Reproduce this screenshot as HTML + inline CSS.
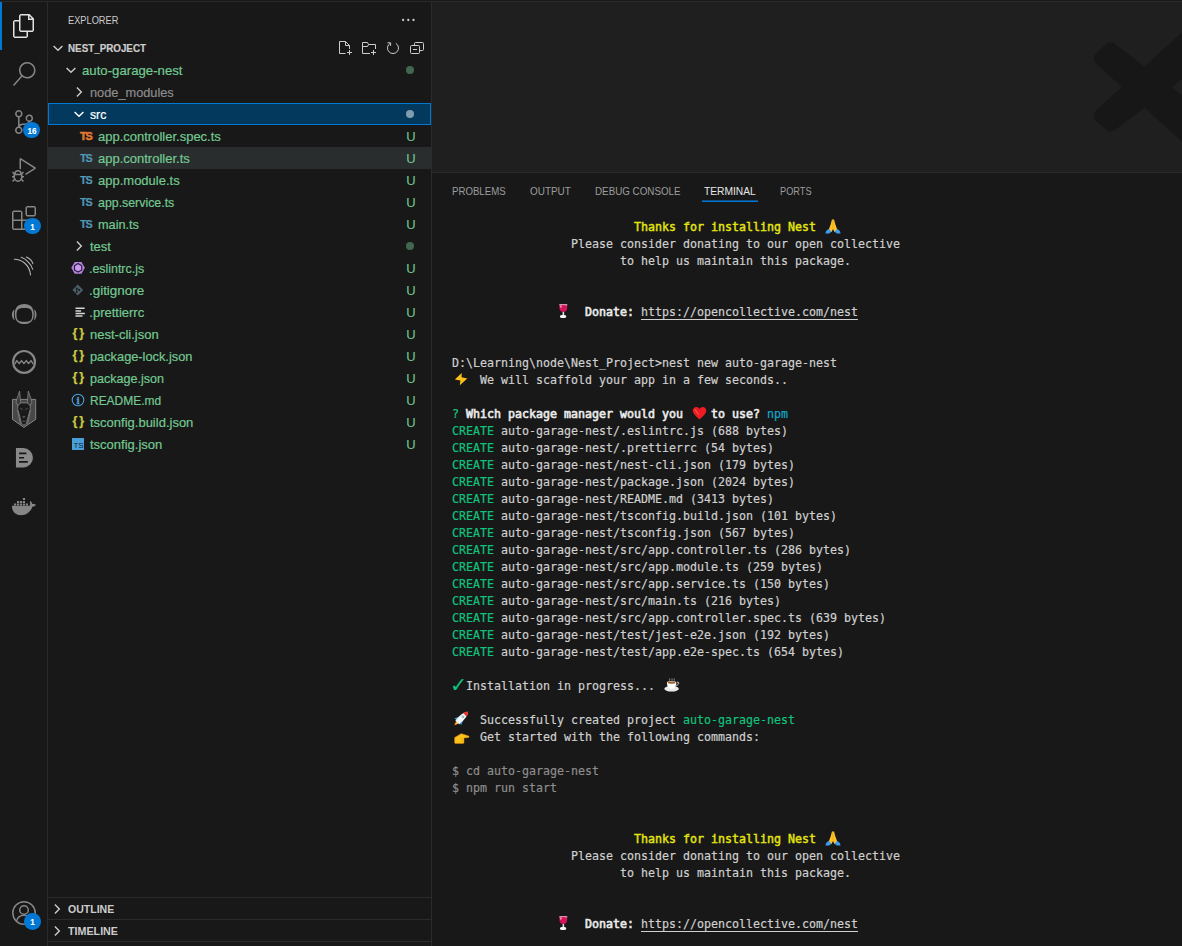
<!DOCTYPE html>
<html lang="en">
<head>
<meta charset="utf-8">
<title>Explorer - Nest_Project</title>
<style>
*{box-sizing:border-box;margin:0;padding:0}
html,body{width:1182px;height:946px;overflow:hidden;background:#181818}
body{position:relative;font-family:"Liberation Sans",sans-serif;font-size:13px;color:#cccccc}
.abs{position:absolute}
svg{display:block;overflow:visible}
#topline{left:0;top:1px;width:1182px;height:1px;background:#2b2b2b}
/* activity bar */
#activity{left:0;top:2px;width:48px;height:944px;background:#181818;border-right:1px solid #2b2b2b}
#activity .ind{left:0;top:0;width:2px;height:48px;background:#0078d4}
.aicon{position:absolute;left:12px;width:24px;height:24px}
.badge{position:absolute;height:16.500px;min-width:16.500px;border-radius:8.250px;background:#0078d4;color:#fff;font-size:9px;font-weight:bold;line-height:18.500px;text-align:center;-webkit-text-stroke:.12px #fff}
.badge span{display:inline-block;transform:scaleX(.9)}
/* sidebar */
#sidebar{left:48px;top:2px;width:384px;height:944px;background:#181818;border-right:1px solid #2b2b2b}
#sbtitle{left:20px;top:10px;font-size:11px;line-height:16px;color:#cccccc;white-space:nowrap}
.sx{display:inline-block;transform-origin:0 50%;white-space:nowrap}
.row{position:absolute;left:0;width:383px;height:22px;line-height:22px;white-space:nowrap}
.row .lbl{position:absolute;top:1px;height:22px;line-height:22px;-webkit-text-stroke:.2px currentColor}
.row .st{position:absolute;left:356px;top:1px;width:14px;text-align:center;font-size:13px;color:#73c991}
.row .dot{position:absolute;left:358px;top:7px;width:8px;height:8px;border-radius:50%;background:#73c991;opacity:.45}
.row.sel{background:#04395e;outline:1px solid #0078d4;outline-offset:-1px}
.row.sel .dot{background:#ffffff;opacity:.5}
.row.hov{background:#2a2d2e}
.g{color:#73c991}
.ign{color:#8c8c8c}
.w{color:#ffffff}
.hdr{font-weight:bold;font-size:11px;color:#cccccc}
.ic{position:absolute}
.tsi{top:0;height:22px;line-height:23px;font-size:10.8px;font-weight:bold;white-space:nowrap;letter-spacing:-1px}
.jsi{top:0;height:22px;line-height:21px;font-size:12.5px;font-weight:bold;color:#cbcb41;letter-spacing:2.1px;white-space:nowrap;-webkit-text-stroke:.25px #cbcb41;margin-left:.4px}
.tsc{top:5px;width:12px;height:12px;background:#4b9fd8;color:#0d2737;font-size:8px;line-height:14px;text-align:right;letter-spacing:-0.2px}
.tsc span{position:absolute;right:.6px;top:1px}
.pane{position:absolute;left:0;width:383px;height:22px;border-top:1px solid #2b2b2b}
/* editor */
#editor{left:432px;top:2px;width:750px;height:170px;background:#1f1f1f;overflow:hidden}
/* panel */
#panel{left:432px;top:172px;width:750px;height:774px;background:#181818;border-top:1px solid #2b2b2b}
.tab{position:absolute;top:10px;height:16px;line-height:16px;font-size:11px;color:#9d9d9d;white-space:nowrap}
.tab.act{color:#e7e7e7}
#tabline{left:270px;top:28px;width:56px;height:1px;background:#0078d4}
#tabline2{left:270px;top:27px;width:56px;height:1px;background:#0c4a80}
#term{left:20px;top:46px;font-family:"DejaVu Sans Mono","Liberation Mono",monospace;font-size:11.63px;line-height:17px;color:#d0d0d0;white-space:pre;-webkit-text-stroke:.18px currentColor}
#term .ln{height:17px;position:relative}
.e{display:inline-block;width:14px;height:17px;vertical-align:top;position:relative}
.e svg{position:absolute;left:0;top:0}
.ck span{position:absolute;left:-2px;top:-1px;font-family:"DejaVu Sans",sans-serif;font-size:20.500px;line-height:17px;color:#10c37e;-webkit-text-stroke:0}
.y{color:#e5e510;-webkit-text-stroke:.42px #e5e510}
.b{color:#ececec;-webkit-text-stroke:.6px #ececec}
.gr{color:#10c37e}
.cy{color:#11a8cd}
.dim{color:#8e8e8e}
.q{color:#16c784}
.u{text-decoration:underline;text-underline-offset:3px;text-decoration-thickness:1px}

</style>
</head>
<body>
<div id="topline" class="abs"></div>
<div id="activity" class="abs">
  <div class="ind abs"></div>
  <!-- explorer (active) -->
  <svg class="aicon" style="top:12px" viewBox="0 0 24 24" fill="#e2e2e2"><path d="M17.500 0h-9L7 1.500V6H2.500L1 7.500v15.070L2.500 24h12.070L16 22.570V18h4.700l1.300-1.430V4.500L17.500 0zm0 2.120l2.380 2.380H17.500V2.120zm-3 20.380h-12v-15H7v9.070L8.500 18h6v4.500zm6-6h-12v-15H16V6h4.500v10.500z"/></svg>
  <!-- search -->
  <svg class="aicon" style="top:60px" viewBox="0 0 24 24" fill="#868686"><path d="M15.250 0a8.250 8.250 0 0 0-6.180 13.720L1 22.880l1.120 1 8.050-9.120A8.251 8.251 0 1 0 15.250.010V0zm0 15a6.750 6.750 0 1 1 0-13.500 6.750 6.750 0 0 1 0 13.500z"/></svg>
  <!-- source control -->
  <svg class="aicon" style="top:108px" viewBox="0 0 24 24" fill="#868686"><path d="M21.007 8.222A3.738 3.738 0 0 0 15.045 5.200a3.737 3.737 0 0 0 1.156 6.583 2.988 2.988 0 0 1-2.668 1.670h-2.990a4.456 4.456 0 0 0-2.989 1.165V7.400a3.737 3.737 0 1 0-1.494 0v9.117a3.776 3.776 0 1 0 1.816.099 2.990 2.990 0 0 1 2.668-1.667h2.990a4.484 4.484 0 0 0 4.223-3.039 3.736 3.736 0 0 0 3.250-3.687zM4.565 3.738a2.242 2.242 0 1 1 4.484 0 2.242 2.242 0 0 1-4.484 0zm4.484 16.441a2.242 2.242 0 1 1-4.484 0 2.242 2.242 0 0 1 4.484 0zm8.221-9.715a2.242 2.242 0 1 1 0-4.485 2.242 2.242 0 0 1 0 4.485z"/></svg>
  <div class="badge" style="left:23.200px;top:119.700px;width:17px"><span>16</span></div>
  <!-- run and debug -->
  <svg class="aicon" style="top:156px" viewBox="0 0 24 24" fill="#868686"><path d="M10.940 13.500l-1.320 1.320a3.730 3.730 0 0 0-7.240 0L1.060 13.500 0 14.560l1.720 1.720-.220.220V18H0v1.500h1.500v.080c.077.489.214.966.410 1.420L0 22.940 1.060 24l1.650-1.650A4.308 4.308 0 0 0 6 24a4.310 4.310 0 0 0 3.290-1.650L10.940 24 12 22.940 10.090 21c.198-.464.336-.951.410-1.450v-.100H12V18h-1.500v-1.500l-.220-.220L12 14.560l-1.060-1.060zM6 13.500a2.250 2.250 0 0 1 2.250 2.250h-4.500A2.250 2.250 0 0 1 6 13.500zm3 6a3.330 3.330 0 0 1-3 3 3.330 3.330 0 0 1-3-3v-2.250h6v2.250zm14.760-9.900v1.260L13.500 17.370V15.600l8.500-5.370L9 2v9.460a5.070 5.070 0 0 0-1.500-.720V.630L8.640 0l15.120 9.600z"/></svg>
  <!-- extensions -->
  <svg class="aicon" style="top:204px" viewBox="0 0 24 24" fill="#868686"><path d="M13.500 1.500L15 0h7.500L24 1.500V9l-1.500 1.500H15L13.500 9V1.500zm1.500 0V9h7.500V1.500H15zM0 15V6l1.500-1.500H9L10.500 6v7.500H18l1.500 1.500v7.500L18 24H1.500L0 22.500V15zm9-1.500V6H1.500v7.500H9zM9 15H1.500v7.500H9V15zm1.500 7.500H18V15h-7.500v7.500z"/></svg>
  <div class="badge" style="left:24px;top:215.500px"><span>1</span></div>
  <!-- arcs -->
  <svg class="aicon" style="top:250px" viewBox="0 0 24 24" fill="none" stroke="#b4b4b4" stroke-width="1.1" stroke-linecap="round"><path d="M2.400 7.300C9 7.300 17.500 12 18.500 22.900"/><path d="M9.200 5.300C13.500 6.600 19 11.500 20.700 17.300"/><path d="M14.400 5.100C17 6.200 20 9 20.900 11.700"/></svg>
  <!-- helmet -->
  <svg class="aicon" style="top:298px" viewBox="0 0 24 24" fill="#868686"><path fill-rule="evenodd" d="M12.30 3.90C18.57 3.90 21.80 7.32 21.80 13.95C21.80 20.58 18.57 24.00 12.30 24.00C6.03 24.00 2.80 20.58 2.80 13.95C2.80 7.32 6.03 3.90 12.30 3.90ZM12.35 8.10C18.47 8.10 20.20 9.60 20.20 14.90C20.20 20.20 18.47 21.70 12.35 21.70C6.23 21.70 4.50 20.20 4.50 14.90C4.50 9.60 6.23 8.10 12.35 8.10Z"/><path d="M2.500 9.400C0.500 10.600 -0.300 13 -0.100 15.200C0.100 17.400 1.100 19.500 2.600 20.300C1.700 16.800 1.700 12.900 2.500 9.400ZM22.100 9.400C24.100 10.600 24.700 13 24.500 15.200C24.300 17.400 23.500 19.500 22 20.300C22.900 16.800 22.900 12.900 22.100 9.400Z"/></svg>
  <!-- circle wave -->
  <svg class="aicon" style="top:348px" viewBox="0 0 24 24" fill="none" stroke="#868686"><circle cx="12.070" cy="11.900" r="10.900" stroke-width="2.200"/><path d="M3.100 13.600L4.800 10.600L7.200 13.600L9.500 10.600L11.900 13.600L14.300 10.600L16.600 13.600L19 10.600L21 13.600" stroke-width="1.400" stroke-linejoin="round" stroke-linecap="round"/></svg>
  <!-- snyk -->
  <svg class="aicon" style="top:388px;height:38px" viewBox="0 0 24 38" fill="none"><path d="M0.500 9.400H23.700V29.400L11.900 37.400L0.500 29.400Z" fill="#484848" stroke="#868686" stroke-width="1"/><path d="M5.900 13.500L8.800 12.900H15.200L18.100 13.500L18.300 19.500L16.200 26.500L14.400 33.500L11.900 35.200L9.400 33.500L7.800 26.500L5.700 19.500Z" fill="#1a1a1a" stroke="#868686" stroke-width=".8" stroke-linejoin="round"/><path d="M7.600 1.100L3.900 12L5.900 15.500L8.800 12.900L8.400 9.400ZM16.300 1.100L20 12L18.100 15.500L15.200 12.900L15.600 9.400Z" fill="#3c3c3c" stroke="#868686" stroke-width=".8" stroke-linejoin="round"/><path d="M5.700 20L6.800 26.500L8.300 34M18.300 20L17.200 26.500L15.700 34" stroke="#7a7a7a" stroke-width=".9"/><path d="M8.400 18.500L10.600 19.400M15.600 18.500L13.400 19.400" stroke="#5a5a5a" stroke-width="1"/><path d="M10.100 26.200H13.500L11.800 28Z" fill="#6a6a6a"/><path d="M10.200 30.600C11 31.800 12.800 31.800 13.600 30.600" stroke="#5a5a5a" stroke-width=".9"/></svg>
  <!-- D -->
  <svg class="aicon" style="top:444px" viewBox="0 0 24 24"><path d="M3.950 2.100H11.300A9.650 9.650 0 0 1 11.300 21.400H3.950Z" fill="#8a8a8a"/><path d="M7 7.350H14.400M7 11.750H12.100M7 15.950H15.800" stroke="#181818" stroke-width="1.700"/></svg>
  <!-- docker -->
  <svg class="aicon" style="top:492px" viewBox="0 0 24 24" fill="#868686"><path d="M-0.100 11.800H17.600C18.400 10.400 18.200 8.600 17.700 7.800L18.600 7.100C19.600 7.900 20.200 9 20.400 10.100C21.600 9.700 22.900 9.900 23.900 10.600C23.400 12 22 12.800 20.400 12.800C18.400 18.200 14.200 21.200 9 21.200C3.400 21.200 -0.100 17.600 -0.100 11.800Z"/><path d="M2.050 9.400H4.200V11.400H2.050zM5 9.400H7.150V11.400H5zM7.950 9.400H10.100V11.400H7.950zM10.900 9.400H13.050V11.400H10.900zM13.850 9.400H16V11.400H13.850zM5 6.900H7.150V8.900H5zM7.950 6.900H10.100V8.900H7.950zM10.900 6.900H13.050V8.900H10.900zM10.900 4.100H13.050V6.100H10.900z"/></svg>
  <!-- account -->
  <svg class="aicon" style="top:898.800px" viewBox="0 0 24 24" fill="none" stroke="#868686" stroke-width="1.500"><circle cx="12" cy="12" r="11.200"/><circle cx="12" cy="9" r="4.300"/><path d="M4.400 20.400C5.400 16.400 8.400 14.300 12 14.300C15.600 14.300 18.600 16.400 19.600 20.400"/></svg>
  <div class="badge" style="left:24px;top:911px"><span>1</span></div>
</div>

<div id="sidebar" class="abs">
  <div id="sbtitle" class="abs"><span class="sx" style="transform:scaleX(.84)">EXPLORER</span></div>
  <svg class="abs" style="left:352px;top:10px" width="16" height="16" viewBox="0 0 16 16" fill="#cccccc"><circle cx="3.100" cy="8" r="1.150"/><circle cx="8.300" cy="8" r="1.150"/><circle cx="13.500" cy="8" r="1.150"/></svg>
<div class="row " style="top:35px"><svg class="ic" style="left:2px;top:3px" width="16" height="16" viewBox="0 0 16 16"><path d="M3.6 5.9 L8 10.3 L12.4 5.9" fill="none" stroke="#cccccc" stroke-width="1.4"/></svg><span class="lbl hdr" style="left:20px;top:0"><span class="sx" style="transform:scaleX(.892)">NEST_PROJECT</span></span><svg class="ic" style="left:289px;top:3px" width="16" height="16" viewBox="0 0 16 16" fill="none" stroke="#cccccc" stroke-width="1"><path d="M8.5 13.5H2.5V1.5H8.5L12.5 5.5V9"/><path d="M8.5 1.5V5.5H12.5"/><path d="M12.5 10V15M10 12.5H15"/></svg>
<svg class="ic" style="left:313px;top:3px" width="16" height="16" viewBox="0 0 16 16" fill="none" stroke="#cccccc" stroke-width="1"><path d="M9 13.5H1.500V2.500H6.5L7.5 4.500H14.5V9"/><path d="M1.5 6.5H6.5L7.5 4.5"/><path d="M12.5 10V15M10 12.5H15"/></svg>
<svg class="ic" style="left:337px;top:3px" width="16" height="16" viewBox="0 0 16 16" fill="none" stroke="#cccccc" stroke-width="1"><path d="M5.2 3.3A5.5 5.5 0 1 0 10.8 3.3"/><path d="M2.5 2.8H5.6V5.9"/></svg>
<svg class="ic" style="left:361px;top:3px" width="16" height="16" viewBox="0 0 16 16" fill="none" stroke="#cccccc" stroke-width="1"><rect x="1.500" y="5.500" width="9" height="8" rx="1"/><path d="M4 9.5H8"/><path d="M5.500 5.500V3.500a1 1 0 0 1 1-1H13.500a1 1 0 0 1 1 1V9.500a1 1 0 0 1-1 1H10.500"/></svg></div>
<div class="row " style="top:57px"><svg class="ic" style="left:15px;top:3px" width="16" height="16" viewBox="0 0 16 16"><path d="M3.6 5.9 L8 10.3 L12.4 5.9" fill="none" stroke="#cccccc" stroke-width="1.4"/></svg><span class="lbl g" style="left:34px"><span class="sx" style="transform:scaleX(1.015)">auto-garage-nest</span></span><span class="dot"></span></div>
<div class="row " style="top:79px"><svg class="ic" style="left:23px;top:3px" width="16" height="16" viewBox="0 0 16 16"><path d="M5.9 3.6 L10.3 8 L5.9 12.4" fill="none" stroke="#cccccc" stroke-width="1.4"/></svg><span class="lbl ign" style="left:42px"><span class="sx" style="transform:scaleX(0.982)">node_modules</span></span></div>
<div class="row sel" style="top:101px"><svg class="ic" style="left:23px;top:3px" width="16" height="16" viewBox="0 0 16 16"><path d="M3.6 5.9 L8 10.3 L12.4 5.9" fill="none" stroke="#ffffff" stroke-width="1.4"/></svg><span class="lbl w" style="left:42px"><span class="sx" style="transform:scaleX(0.940)">src</span></span><span class="dot"></span></div>
<div class="row " style="top:123px"><span class="ic tsi" style="left:32px;color:#e37933;-webkit-text-stroke:.5px #e37933">TS</span><span class="lbl g" style="left:50px">app.controller.spec.ts</span><span class="st">U</span></div>
<div class="row hov" style="top:145px"><span class="ic tsi" style="left:32px;color:#519aba;-webkit-text-stroke:.15px #519aba">TS</span><span class="lbl g" style="left:50px">app.controller.ts</span><span class="st">U</span></div>
<div class="row " style="top:167px"><span class="ic tsi" style="left:32px;color:#519aba;-webkit-text-stroke:.15px #519aba">TS</span><span class="lbl g" style="left:50px">app.module.ts</span><span class="st">U</span></div>
<div class="row " style="top:189px"><span class="ic tsi" style="left:32px;color:#519aba;-webkit-text-stroke:.15px #519aba">TS</span><span class="lbl g" style="left:50px"><span class="sx" style="transform:scaleX(0.951)">app.service.ts</span></span><span class="st">U</span></div>
<div class="row " style="top:211px"><span class="ic tsi" style="left:32px;color:#519aba;-webkit-text-stroke:.15px #519aba">TS</span><span class="lbl g" style="left:50px"><span class="sx" style="transform:scaleX(0.978)">main.ts</span></span><span class="st">U</span></div>
<div class="row " style="top:233px"><svg class="ic" style="left:23px;top:3px" width="16" height="16" viewBox="0 0 16 16"><path d="M5.9 3.6 L10.3 8 L5.9 12.4" fill="none" stroke="#cccccc" stroke-width="1.4"/></svg><span class="lbl g" style="left:42px">test</span><span class="dot"></span></div>
<div class="row " style="top:255px"><svg class="ic" style="left:24px;top:0" width="14" height="22" viewBox="0 0 14 22"><path d="M-0.700 10.800L2.700 4.900H9.500L12.900 10.800L9.500 16.700H2.700Z" fill="#b083d8"/><path d="M6.100 6.600L9.700 8.700V12.900L6.100 15L2.500 12.900V8.700Z" fill="#c79be8" stroke="#2a1a4a" stroke-width="1.100" stroke-linejoin="round"/></svg><span class="lbl g" style="left:41.3px"><span class="sx" style="transform:scaleX(0.953)">.eslintrc.js</span></span><span class="st">U</span></div>
<div class="row " style="top:277px"><svg class="ic" style="left:24px;top:0" width="14" height="22" viewBox="0 0 14 22"><path d="M5.800 5.600L11.200 11L5.800 16.400L0.400 11Z" fill="#4b5f68"/><circle cx="4.700" cy="9.400" r=".9" fill="#181818"/><circle cx="7.300" cy="11" r=".9" fill="#181818"/><circle cx="4.700" cy="13" r=".9" fill="#181818"/><path d="M4.700 9.400V13M4.700 9.400L7.300 11" stroke="#181818" stroke-width=".8" fill="none"/></svg><span class="lbl g" style="left:41.3px"><span class="sx" style="transform:scaleX(1.030)">.gitignore</span></span><span class="st">U</span></div>
<div class="row " style="top:299px"><svg class="ic" style="left:24px;top:0" width="14" height="22" viewBox="0 0 14 22"><path d="M3.500 7.300H12.600M3.500 9.900H9.100M3.500 12.400H12.900M3.500 15H10.500" stroke="#d4d7d6" stroke-width="1.500" fill="none"/></svg><span class="lbl g" style="left:41.3px">.prettierrc</span><span class="st">U</span></div>
<div class="row " style="top:321px"><span class="ic jsi" style="left:24px">{}</span><span class="lbl g" style="left:42px">nest-cli.json</span><span class="st">U</span></div>
<div class="row " style="top:343px"><span class="ic jsi" style="left:24px">{}</span><span class="lbl g" style="left:42px"><span class="sx" style="transform:scaleX(0.984)">package-lock.json</span></span><span class="st">U</span></div>
<div class="row " style="top:365px"><span class="ic jsi" style="left:24px">{}</span><span class="lbl g" style="left:42px"><span class="sx" style="transform:scaleX(0.967)">package.json</span></span><span class="st">U</span></div>
<div class="row " style="top:387px"><svg class="ic" style="left:24px;top:0" width="14" height="22" viewBox="0 0 14 22"><circle cx="6" cy="11" r="5.800" fill="none" stroke="#4b9fd8" stroke-width="1.100"/><text x="6" y="14.600" text-anchor="middle" font-family="Liberation Serif,serif" font-weight="bold" font-size="11" fill="#4b9fd8" stroke="#4b9fd8" stroke-width=".3">i</text></svg><span class="lbl g" style="left:42px"><span class="sx" style="transform:scaleX(0.920)">README.md</span></span><span class="st">U</span></div>
<div class="row " style="top:409px"><span class="ic jsi" style="left:24px">{}</span><span class="lbl g" style="left:42px">tsconfig.build.json</span><span class="st">U</span></div>
<div class="row " style="top:431px"><span class="ic tsc" style="left:24px"><span>TS</span></span><span class="lbl g" style="left:42px">tsconfig.json</span><span class="st">U</span></div>
<div class="pane" style="top:895px"><svg class="ic" style="left:1px;top:3px" width="16" height="16" viewBox="0 0 16 16"><path d="M5.9 3.6 L10.3 8 L5.9 12.4" fill="none" stroke="#cccccc" stroke-width="1.4"/></svg><span class="lbl hdr abs" style="left:20px;top:0;height:22px;line-height:22px"><span class="sx" style="transform:scaleX(.957)">OUTLINE</span></span></div>
<div class="pane" style="top:917px"><svg class="ic" style="left:1px;top:3px" width="16" height="16" viewBox="0 0 16 16"><path d="M5.9 3.6 L10.3 8 L5.9 12.4" fill="none" stroke="#cccccc" stroke-width="1.4"/></svg><span class="lbl hdr abs" style="left:20px;top:0;height:22px;line-height:22px"><span class="sx" style="transform:scaleX(.974)">TIMELINE</span></span></div>
<div class="pane" style="top:939px"></div>
</div>

<div id="editor" class="abs">
  <svg class="abs" style="left:662px;top:-1.100px" width="172" height="172" viewBox="0 0 100 100"><path fill="#171717" fill-rule="evenodd" d="M70.912 99.317C72.487 99.931 74.283 99.891 75.873 99.126L96.461 89.220C98.624 88.179 100 85.989 100 83.587V16.413C100 14.011 98.624 11.822 96.461 10.781L75.873 0.874C73.786 -0.130 71.345 0.116 69.514 1.447C69.252 1.637 69.003 1.849 68.769 2.083L29.355 38.042L12.187 25.010C10.589 23.797 8.354 23.896 6.869 25.246L1.363 30.255C-0.453 31.906 -0.455 34.763 1.359 36.417L16.247 50L1.359 63.583C-0.455 65.237 -0.453 68.094 1.363 69.745L6.869 74.754C8.354 76.104 10.589 76.204 12.187 74.991L29.355 61.959L68.769 97.917C69.393 98.541 70.125 99.010 70.912 99.317ZM75.015 27.299L45.109 50L75.015 72.701V27.299Z"/></svg>
</div>

<div id="panel" class="abs">
  <div class="tab " style="left:20px"><span class="sx" style="transform:scaleX(0.877)">PROBLEMS</span></div>
  <div class="tab " style="left:97.79999999999995px"><span class="sx" style="transform:scaleX(0.902)">OUTPUT</span></div>
  <div class="tab " style="left:163px"><span class="sx" style="transform:scaleX(0.892)">DEBUG CONSOLE</span></div>
  <div class="tab act" style="left:272.20000000000005px"><span class="sx" style="transform:scaleX(0.931)">TERMINAL</span></div>
  <div class="tab " style="left:348.29999999999995px"><span class="sx" style="transform:scaleX(0.836)">PORTS</span></div>
  <div id="tabline" class="abs"></div><div id="tabline2" class="abs"></div>
  <div id="term" class="abs"><div class="ln">                          <span class="y">Thanks for installing Nest</span> <span class="e" role="img" aria-label="🙏"><svg width="14" height="17" viewBox="0 0 14 17"><path d="M8.900 0.500H11.100L12.200 5L14.200 10.500L11.600 13.200L10 10L8.400 13.200L5.800 10.500L7.800 5Z" fill="#fdc328"/><path d="M10 1V9.500" stroke="#e59a10" stroke-width=".6"/><path d="M5.900 9.700L8.400 12.700L6.200 14.400H2.400L3.100 12Z" fill="#3d9df2"/><path d="M14.100 9.700L11.600 12.700L13.800 14.400H17.600L16.900 12Z" fill="#3d9df2"/></svg></span></div><div class="ln">                 Please consider donating to our open collective</div><div class="ln">                        to help us maintain this package.</div><div class="ln"></div><div class="ln"></div><div class="ln">               <span class="e" role="img" aria-label="🍷"><svg width="14" height="17" viewBox="0 0 14 17"><path d="M2.400 0.300H10.200V3.800C10.200 6.600 8.500 8.200 6.300 8.200C4.100 8.200 2.400 6.600 2.400 3.800Z" fill="#d4145a"/><path d="M2.400 0.300H10.200V1.600C8 0.900 4.600 0.900 2.400 1.600Z" fill="#d9c3cc"/><path d="M3 1.800C3.600 1.500 4.200 1.400 4.800 1.400V3.200C4.200 3.200 3.600 3.400 3 3.800Z" fill="#f48fb1"/><rect x="5.600" y="8" width="1.500" height="3.600" fill="#e4e4e4"/><ellipse cx="6.100" cy="12.400" rx="3.150" ry="1.600" fill="#f7f7f7"/></svg></span>  <span class="b">Donate:</span> <span class="u">https://opencollective.com/nest</span></div><div class="ln"></div><div class="ln"></div><div class="ln">D:\Learning\node\Nest_Project&gt;nest new auto-garage-nest</div><div class="ln"><span class="e" role="img" aria-label="⚡"><svg width="14" height="17" viewBox="0 0 14 17"><path d="M9.700 1.100L2.850 7.400L8.400 8.500L7.800 13.250L15.300 6.400L9.600 5.200Z" fill="#fcc01c"/></svg></span>  We will scaffold your app in a few seconds..</div><div class="ln"></div><div class="ln"><span class="q">?</span> <span class="b">Which package manager would you <span class="e" role="img" aria-label="❤️"><svg width="14" height="17" viewBox="0 0 14 17"><path d="M9.550 13.500C7 11 2.800 8 2.800 4.600C2.800 2.300 4.500 0.900 6.300 0.900C7.800 0.900 8.900 1.800 9.550 3C10.200 1.800 11.300 0.900 12.800 0.900C14.600 0.900 16.300 2.300 16.300 4.600C16.300 8 12.100 11 9.550 13.500Z" fill="#ec1c24"/><path d="M4.900 3.400L8.400 8.200" stroke="#ff6a3a" stroke-width="1" fill="none" stroke-linecap="round"/></svg></span> to use?</span> <span class="cy">npm</span></div><div class="ln"><span class="gr">CREATE</span> auto-garage-nest/.eslintrc.js (688 bytes)</div><div class="ln"><span class="gr">CREATE</span> auto-garage-nest/.prettierrc (54 bytes)</div><div class="ln"><span class="gr">CREATE</span> auto-garage-nest/nest-cli.json (179 bytes)</div><div class="ln"><span class="gr">CREATE</span> auto-garage-nest/package.json (2024 bytes)</div><div class="ln"><span class="gr">CREATE</span> auto-garage-nest/README.md (3413 bytes)</div><div class="ln"><span class="gr">CREATE</span> auto-garage-nest/tsconfig.build.json (101 bytes)</div><div class="ln"><span class="gr">CREATE</span> auto-garage-nest/tsconfig.json (567 bytes)</div><div class="ln"><span class="gr">CREATE</span> auto-garage-nest/src/app.controller.ts (286 bytes)</div><div class="ln"><span class="gr">CREATE</span> auto-garage-nest/src/app.module.ts (259 bytes)</div><div class="ln"><span class="gr">CREATE</span> auto-garage-nest/src/app.service.ts (150 bytes)</div><div class="ln"><span class="gr">CREATE</span> auto-garage-nest/src/main.ts (216 bytes)</div><div class="ln"><span class="gr">CREATE</span> auto-garage-nest/src/app.controller.spec.ts (639 bytes)</div><div class="ln"><span class="gr">CREATE</span> auto-garage-nest/test/jest-e2e.json (192 bytes)</div><div class="ln"><span class="gr">CREATE</span> auto-garage-nest/test/app.e2e-spec.ts (654 bytes)</div><div class="ln"></div><div class="ln"><span class="e ck"><span>✓</span></span>Installation in progress... <span class="e" role="img" aria-label="☕"><svg width="14" height="17" viewBox="0 0 14 17"><ellipse cx="9.600" cy="10.700" rx="7.300" ry="2.900" fill="#e9e9e9"/><path d="M15 4.200C17.400 3.600 17.400 6.800 14.200 7.400" fill="none" stroke="#dcdcdc" stroke-width="1"/><path d="M4.900 4.300H14.300C14.300 8.200 12.800 10.900 9.600 10.900C6.400 10.900 4.900 8.200 4.900 4.300Z" fill="#ffffff"/><ellipse cx="9.600" cy="4.500" rx="4.600" ry="1.600" fill="#ffffff"/><ellipse cx="9.600" cy="4.600" rx="3.900" ry="1.200" fill="#9a5b23"/><path d="M7.600 2.600C7 1.800 8.200 1.400 7.600 0.500M10 2.600C9.400 1.800 10.600 1.400 10 0.500M12.200 2.600C11.600 1.800 12.800 1.400 12.200 0.500" stroke="#cfcfcf" stroke-width=".7" fill="none"/></svg></span></div><div class="ln"></div><div class="ln"><span class="e" role="img" aria-label="🚀"><svg width="14" height="17" viewBox="0 0 14 17"><g transform="translate(2.200 13.500) rotate(45)"><path d="M-1.900 -4.600H1.900L0 0Z" fill="#ff8f1f"/><path d="M-1 -4.600H1L0 -1.800Z" fill="#ffd54a"/><path d="M-2.700 -10L-4.800 -5L-2.700 -5.600ZM2.700 -10L4.800 -5L2.700 -5.600Z" fill="#27a1e8"/><path d="M0 -19.400C2.700 -16.600 3.200 -11.500 2.700 -4.400H-2.700C-3.200 -11.500 -2.700 -16.600 0 -19.400Z" fill="#f2f6f8"/><path d="M0 -19.400C1.400 -18 2.200 -16.600 2.650 -15.200H-2.650C-2.200 -16.600 -1.400 -18 0 -19.400Z" fill="#e8352e"/><circle cx="0" cy="-12.400" r="1.400" fill="#a9b9c4"/></g></svg></span>  Successfully created project <span class="gr">auto-garage-nest</span></div><div class="ln"><span class="e" role="img" aria-label="👉"><svg width="14" height="17" viewBox="0 0 14 17"><path d="M2.650 8.500L8.700 4.900C9.300 4.600 9.900 4.700 10.400 5L16.500 6.900C17.300 7.100 17.300 8.400 16.500 8.500L12 8.900V13.600C12 14.100 11.700 14.400 11.200 14.400H3.400C2.900 14.400 2.600 14.100 2.600 13.600Z" fill="#fcc21b" stroke="#d98e08" stroke-width=".5" stroke-linejoin="round"/><path d="M8.200 9.200H12M8.600 10.900H12M8.600 12.600H12" stroke="#e0a010" stroke-width=".5" fill="none"/></svg></span>  Get started with the following commands:</div><div class="ln"></div><div class="ln"><span class="dim">$ cd auto-garage-nest</span></div><div class="ln"><span class="dim">$ npm run start</span></div><div class="ln"></div><div class="ln"></div><div class="ln">                          <span class="y">Thanks for installing Nest</span> <span class="e" role="img" aria-label="🙏"><svg width="14" height="17" viewBox="0 0 14 17"><path d="M8.900 0.500H11.100L12.200 5L14.200 10.500L11.600 13.200L10 10L8.400 13.200L5.800 10.500L7.800 5Z" fill="#fdc328"/><path d="M10 1V9.500" stroke="#e59a10" stroke-width=".6"/><path d="M5.900 9.700L8.400 12.700L6.200 14.400H2.400L3.100 12Z" fill="#3d9df2"/><path d="M14.100 9.700L11.600 12.700L13.800 14.400H17.600L16.900 12Z" fill="#3d9df2"/></svg></span></div><div class="ln">                 Please consider donating to our open collective</div><div class="ln">                        to help us maintain this package.</div><div class="ln"></div><div class="ln"></div><div class="ln">               <span class="e" role="img" aria-label="🍷"><svg width="14" height="17" viewBox="0 0 14 17"><path d="M2.400 0.300H10.200V3.800C10.200 6.600 8.500 8.200 6.300 8.200C4.100 8.200 2.400 6.600 2.400 3.800Z" fill="#d4145a"/><path d="M2.400 0.300H10.200V1.600C8 0.900 4.600 0.900 2.400 1.600Z" fill="#d9c3cc"/><path d="M3 1.800C3.600 1.500 4.200 1.400 4.800 1.400V3.200C4.200 3.200 3.600 3.400 3 3.800Z" fill="#f48fb1"/><rect x="5.600" y="8" width="1.500" height="3.600" fill="#e4e4e4"/><ellipse cx="6.100" cy="12.400" rx="3.150" ry="1.600" fill="#f7f7f7"/></svg></span>  <span class="b">Donate:</span> <span class="u">https://opencollective.com/nest</span></div><div class="ln"></div></div>
</div>

</body>
</html>
